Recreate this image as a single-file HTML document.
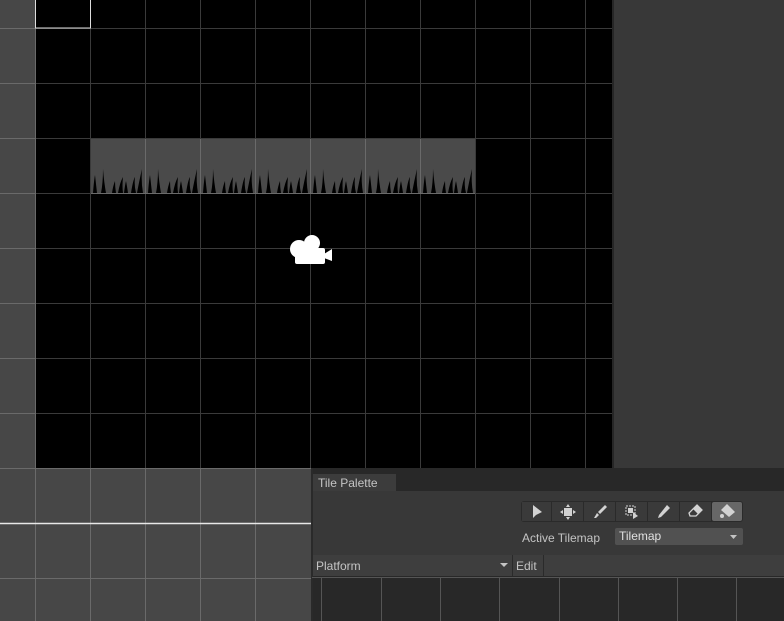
<!DOCTYPE html>
<html><head><style>
html,body{margin:0;padding:0;width:784px;height:621px;overflow:hidden;background:#474747;font-family:"Liberation Sans",sans-serif;}
.abs{position:absolute}
</style></head><body>
<svg class="abs" style="left:0;top:0" width="784" height="621">
<rect x="0" y="0" width="784" height="621" fill="#474747"/>
<rect x="36" y="0" width="576" height="468" fill="#000"/>
<g stroke="#6a6a6a" stroke-width="1">
<line x1="0" y1="28.5" x2="36" y2="28.5"/><line x1="0" y1="83.5" x2="36" y2="83.5"/><line x1="0" y1="138.5" x2="36" y2="138.5"/><line x1="0" y1="193.5" x2="36" y2="193.5"/><line x1="0" y1="248.5" x2="36" y2="248.5"/><line x1="0" y1="303.5" x2="36" y2="303.5"/><line x1="0" y1="358.5" x2="36" y2="358.5"/><line x1="0" y1="413.5" x2="36" y2="413.5"/>
<line x1="0" y1="468.5" x2="311" y2="468.5"/><line x1="0" y1="578.5" x2="311" y2="578.5"/>
<line x1="35.5" y1="0" x2="35.5" y2="621"/>
<line x1="90.5" y1="468" x2="90.5" y2="621"/><line x1="145.5" y1="468" x2="145.5" y2="621"/><line x1="200.5" y1="468" x2="200.5" y2="621"/><line x1="255.5" y1="468" x2="255.5" y2="621"/>
</g>
<g stroke="#3a3a3a" stroke-width="1">
<line x1="36" y1="28.5" x2="612" y2="28.5"/><line x1="36" y1="83.5" x2="612" y2="83.5"/><line x1="36" y1="138.5" x2="612" y2="138.5"/><line x1="36" y1="193.5" x2="612" y2="193.5"/><line x1="36" y1="248.5" x2="612" y2="248.5"/><line x1="36" y1="303.5" x2="612" y2="303.5"/><line x1="36" y1="358.5" x2="612" y2="358.5"/><line x1="36" y1="413.5" x2="612" y2="413.5"/>
<line x1="90.5" y1="0" x2="90.5" y2="468"/><line x1="145.5" y1="0" x2="145.5" y2="468"/><line x1="200.5" y1="0" x2="200.5" y2="468"/><line x1="255.5" y1="0" x2="255.5" y2="468"/><line x1="310.5" y1="0" x2="310.5" y2="468"/><line x1="365.5" y1="0" x2="365.5" y2="468"/><line x1="420.5" y1="0" x2="420.5" y2="468"/><line x1="475.5" y1="0" x2="475.5" y2="468"/><line x1="530.5" y1="0" x2="530.5" y2="468"/><line x1="585.5" y1="0" x2="585.5" y2="468"/>
</g>
<rect x="91" y="139" width="384" height="54" fill="#4a4a4a"/>
<g stroke="#6a6a6a"><line x1="145.5" y1="139" x2="145.5" y2="193"/><line x1="200.5" y1="139" x2="200.5" y2="193"/><line x1="255.5" y1="139" x2="255.5" y2="193"/><line x1="310.5" y1="139" x2="310.5" y2="193"/><line x1="365.5" y1="139" x2="365.5" y2="193"/><line x1="420.5" y1="139" x2="420.5" y2="193"/><line x1="91" y1="193.5" x2="475" y2="193.5"/></g>
<g fill="#000" id="grass">
<path d="M93 193 Q94 180 95 175 Q96 184 97 193Z M101 193 Q103 183 103 169 Q104 182 106 193Z M112 193 Q113 186 115 181 Q115 187 116 193Z M118 193 Q120 182 123 177 Q122 186 123 193Z M124 193 Q125 185 126 181 Q127 186 128 193Z M131 193 Q133 180 135 177 Q134 185 136 193Z M137 193 Q139 182 142 169 Q141 182 143 193Z"/>
</g>
<use href="#grass" x="55"/><use href="#grass" x="110"/><use href="#grass" x="165"/><use href="#grass" x="220"/><use href="#grass" x="275"/><use href="#grass" x="330"/>
<rect x="35.5" y="-1" width="55" height="29" fill="none" stroke="#ddd" stroke-width="1"/>
<line x1="0" y1="523.5" x2="311" y2="523.5" stroke="#e8e8e8" stroke-width="1.5"/>
<rect x="612" y="0" width="2" height="468" fill="#262626"/>
<rect x="614" y="0" width="170" height="468" fill="#383838"/>
<g fill="#fff">
<circle cx="299" cy="249" r="9"/><circle cx="312" cy="243" r="8"/>
<rect x="295" y="248" width="30" height="16" rx="2"/>
<path d="M324 254 L332 249 L332 261 L324 258Z"/>
</g>
<rect x="311" y="468" width="473" height="153" fill="#383838"/>
<rect x="311" y="468" width="473" height="23" fill="#282828"/>
<rect x="312" y="474" width="84" height="17" fill="#3c3c3c"/>
<text x="318" y="487" font-family="Liberation Sans,sans-serif" font-size="12" fill="#c4c4c4">Tile Palette</text>
<rect x="521" y="501" width="222" height="21" rx="3" fill="#2a2a2a"/>
<g fill="#3a3a3a"><rect x="522" y="502" width="29" height="19"/><rect x="552" y="502" width="31" height="19"/><rect x="584" y="502" width="31" height="19"/><rect x="616" y="502" width="31" height="19"/><rect x="648" y="502" width="31" height="19"/><rect x="680" y="502" width="31" height="19"/></g>
<rect x="712" y="502" width="30" height="19" rx="2" fill="#676767"/>
<g fill="#d2d2d2">
<path d="M533 505 L533 518 L536 515 L542 512Z"/>
<rect x="564" y="508" width="8" height="8"/><path d="M568 504 L566 507 L570 507Z M568 520 L566 517 L570 517Z M560 512 L563 510 L563 514Z M576 512 L573 510 L573 514Z"/>
<path d="M605 505 L607 507 L600 514 L598 512Z M597 513 L599 515 L596 518 L594 518Z"/>
<rect x="626" y="506" width="9" height="9" fill="none" stroke="#d2d2d2" stroke-dasharray="2 1"/><rect x="628" y="508" width="5" height="5"/><path d="M633 512 L633 519 L638 516Z"/>
<path d="M667 505 L670 508 L661 517 L658 518 L659 515Z"/>
<path d="M697 505 L702 510 L696 516 L690 516 L689 513Z" fill="none" stroke="#d2d2d2" stroke-width="1.3"/><path d="M697 505 L702 510 L698 514 L693 509Z"/>
<path d="M727 504 L735 512 L729 517 L721 510Z"/><circle cx="722" cy="516" r="2"/>
</g>
<text x="522" y="542" font-family="Liberation Sans,sans-serif" font-size="12" fill="#c4c4c4">Active Tilemap</text>
<rect x="615" y="528" width="128" height="17" rx="2" fill="#515151"/>
<text x="619" y="540" font-family="Liberation Sans,sans-serif" font-size="12" fill="#e0e0e0">Tilemap</text>
<path d="M730 535 L737 535 L733.5 539Z" fill="#c4c4c4"/>
<rect x="311" y="555" width="473" height="21" fill="#3e3e3e"/>
<rect x="312" y="555" width="201" height="21" fill="#3e3e3e"/>
<rect x="512" y="555" width="1" height="21" fill="#2a2a2a"/><rect x="543" y="555" width="1" height="21" fill="#2a2a2a"/>
<text x="316" y="570" font-family="Liberation Sans,sans-serif" font-size="12" fill="#c4c4c4">Platform</text>
<path d="M500 563 L508 563 L504 567Z" fill="#c4c4c4"/>
<text x="516" y="570" font-family="Liberation Sans,sans-serif" font-size="12" fill="#c4c4c4">Edit</text>
<rect x="311" y="576" width="473" height="45" fill="#282828"/>
<rect x="311" y="468" width="2" height="153" fill="#2a2a2a"/>
<g stroke="#555"><line x1="312" y1="577.5" x2="784" y2="577.5"/>
<line x1="321.5" y1="577" x2="321.5" y2="621"/><line x1="381.5" y1="577" x2="381.5" y2="621"/><line x1="440.5" y1="577" x2="440.5" y2="621"/><line x1="499.5" y1="577" x2="499.5" y2="621"/><line x1="559.5" y1="577" x2="559.5" y2="621"/><line x1="618.5" y1="577" x2="618.5" y2="621"/><line x1="677.5" y1="577" x2="677.5" y2="621"/><line x1="736.5" y1="577" x2="736.5" y2="621"/></g>
</svg>
</body></html>
